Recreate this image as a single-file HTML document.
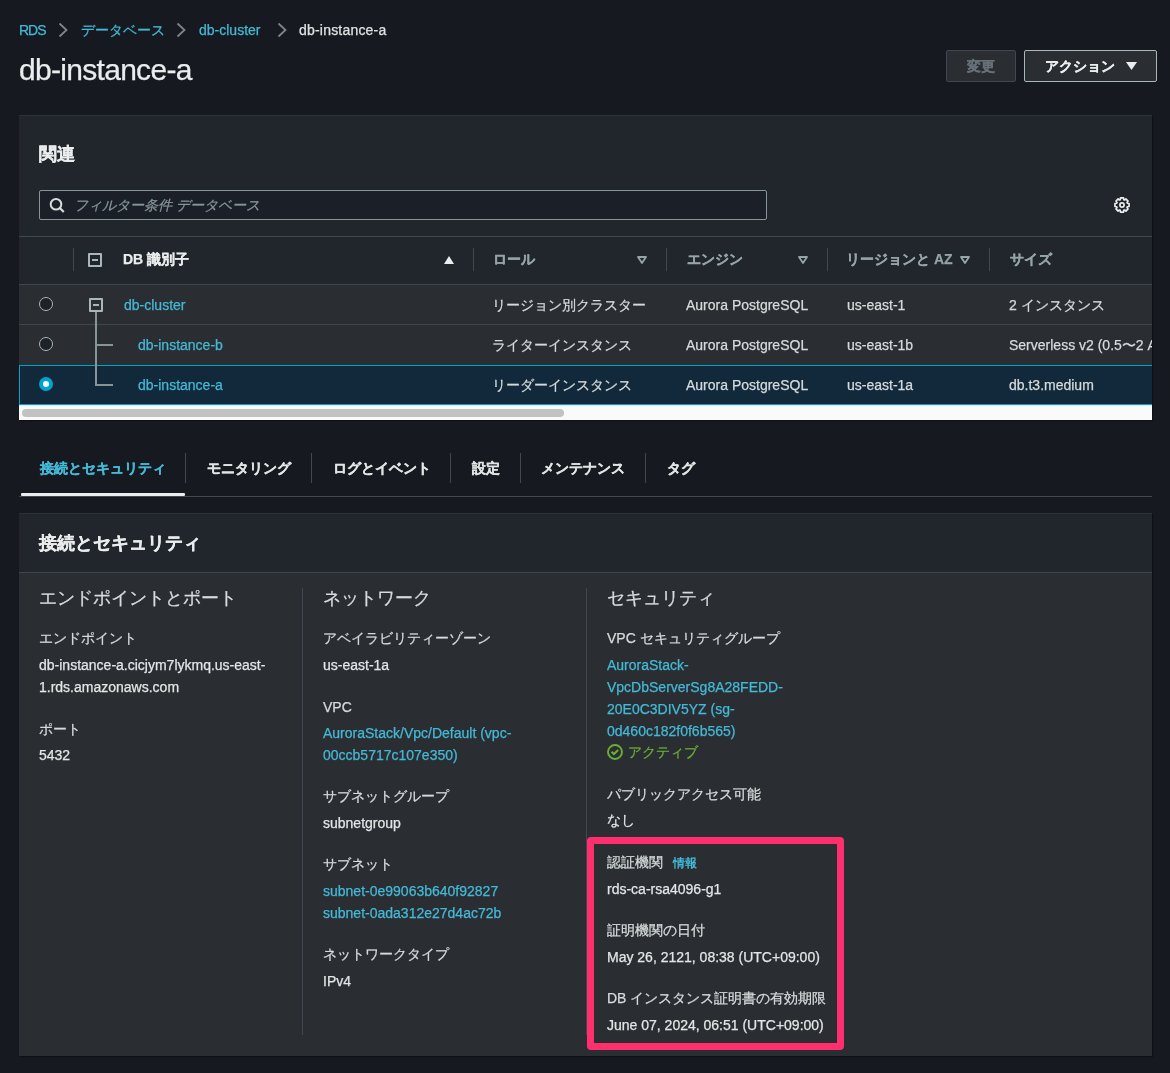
<!DOCTYPE html>
<html lang="ja">
<head>
<meta charset="utf-8">
<style>
*{box-sizing:border-box;margin:0;padding:0}
html,body{width:1170px;height:1073px;overflow:hidden;background:#16191f;font-family:"Liberation Sans",sans-serif;color:#d5dbdb;font-size:14px}
.t{position:absolute;white-space:nowrap;line-height:22px}

.b{font-weight:bold}
.chev{position:absolute;top:22px;width:10px;height:16px}
.btn{position:absolute;top:50px;height:32px;border:1px solid #545b64;border-radius:2px;font-weight:bold;font-size:14px;line-height:30px;text-align:center}
.panel{position:absolute;left:19px;width:1133px;background:#21252c;box-shadow:inset 0 1px 0 #2c3037,1px 1px 1px rgba(0,0,0,.35)}
.vd{position:absolute;width:1px;background:#414750}
.hd{position:absolute;width:1133px;height:1px;background:#414750;left:0}
.radio{position:absolute;left:20px;width:14px;height:14px;border-radius:50%;border:1px solid #aab7b8;background:#1d2128}
.icb{position:absolute;width:14px;height:14px;border:2px solid #aab7b8;border-radius:1px}
.icb:after{content:"";position:absolute;left:2px;top:4px;width:6px;height:2px;background:#aab7b8}
.lbl{position:absolute;white-space:nowrap;line-height:22px;color:#d5dbdb}
.val{position:absolute;white-space:nowrap;line-height:22px;color:#e3e6e6}
.tab{position:absolute;top:457px;font-weight:bold;line-height:22px;color:#e1e4e4;white-space:nowrap}
.colh{position:absolute;font-size:18px;color:#d5dbdb;line-height:26px;white-space:nowrap}
.th{position:absolute;top:133px;font-weight:bold;color:#95a5a6;line-height:22px;white-space:nowrap}
.td{position:absolute;line-height:22px;white-space:nowrap;color:#d5dbdb}
.link,.val.link,.td.link,.tab.link{color:#44b9d6}
body *{-webkit-text-stroke:0.25px currentColor}
</style>
</head>
<body><div style="position:absolute;left:0;top:0;width:1170px;height:1073px;will-change:transform">
<!-- breadcrumb -->
<div class="t link" style="left:19px;top:19px;letter-spacing:-1px">RDS</div>
<svg class="chev" style="left:58px" width="10" height="16" viewBox="0 0 10 16"><path d="M1.5 1.5l7 6.5-7 6.5" fill="none" stroke="#7d8788" stroke-width="1.8"/></svg>
<div class="t link" style="left:81px;top:19px">データベース</div>
<svg class="chev" style="left:176px" width="10" height="16" viewBox="0 0 10 16"><path d="M1.5 1.5l7 6.5-7 6.5" fill="none" stroke="#7d8788" stroke-width="1.8"/></svg>
<div class="t link" style="left:199px;top:19px">db-cluster</div>
<svg class="chev" style="left:277px" width="10" height="16" viewBox="0 0 10 16"><path d="M1.5 1.5l7 6.5-7 6.5" fill="none" stroke="#7d8788" stroke-width="1.8"/></svg>
<div class="t" style="left:299px;top:19px;color:#dfe3e3;letter-spacing:0.2px">db-instance-a</div>

<div class="t" style="left:19px;top:52px;font-size:30px;line-height:36px;letter-spacing:-0.7px;color:#eaeded">db-instance-a</div>

<div class="btn" style="left:946px;width:70px;background:#2a2e33;border-color:#414750;color:#687078">変更</div>
<div class="btn" style="left:1024px;width:133px;background:#2a2e33;border-color:#aab7b8;color:#eaeded;text-align:left;padding-left:20px">アクション</div><svg style="position:absolute;left:1126px;top:62px" width="11" height="8" viewBox="0 0 11 8"><path d="M0 0H11L5.5 8z" fill="#eaeded"/></svg>

<!-- panel 1 -->
<div class="panel" style="top:115px;height:305px;overflow:hidden">
  <div class="t b" style="left:20px;top:27px;font-size:18px;line-height:24px;color:#eaeded">関連</div>
  <div style="position:absolute;left:20px;top:75px;width:728px;height:30px;border:1px solid #879596;border-radius:2px;background:#1a1f28"></div>
  <svg style="position:absolute;left:29px;top:81px" width="18" height="18" viewBox="0 0 18 18"><circle cx="8" cy="8.2" r="5.3" fill="none" stroke="#d5dbdb" stroke-width="2"/><path d="M11.8 12l4 4" stroke="#d5dbdb" stroke-width="2.2"/></svg>
  <div class="t" style="left:55px;top:79px;font-style:italic;color:#879596">フィルター条件 データベース</div>
  <svg style="position:absolute;left:1095px;top:82px" width="16" height="16" viewBox="0 0 16 16"><path d="M13.33 6.27 L15.04 6.50 L15.04 9.50 L13.33 9.73 L12.99 10.54 L14.04 11.92 L11.92 14.04 L10.54 12.99 L9.73 13.33 L9.50 15.04 L6.50 15.04 L6.27 13.33 L5.46 12.99 L4.08 14.04 L1.96 11.92 L3.01 10.54 L2.67 9.73 L0.96 9.50 L0.96 6.50 L2.67 6.27 L3.01 5.46 L1.96 4.08 L4.08 1.96 L5.46 3.01 L6.27 2.67 L6.50 0.96 L9.50 0.96 L9.73 2.67 L10.54 3.01 L11.92 1.96 L14.04 4.08 L12.99 5.46Z" fill="none" stroke="#eaeded" stroke-width="1.7" stroke-linejoin="round"/><circle cx="8" cy="8" r="2.1" fill="none" stroke="#eaeded" stroke-width="1.7"/></svg>

  <!-- table -->
  <div class="hd" style="top:121px"></div>
  <div class="vd" style="left:54px;top:133px;height:23px"></div>
  <div class="icb" style="left:69px;top:138px"></div>
  <div class="th" style="left:104px;color:#eaeded">DB 識別子</div>
  <svg style="position:absolute;left:425px;top:141px" width="10" height="8" viewBox="0 0 10 8"><path d="M5 0L10 8H0z" fill="#eaeded"/></svg>
  <div class="vd" style="left:454px;top:133px;height:23px"></div>
  <div class="th" style="left:474px">ロール</div>
  <svg style="position:absolute;left:618px;top:141px" width="10" height="8" viewBox="0 0 10 8"><path d="M1 1H9L5 7z" fill="none" stroke="#95a5a6" stroke-width="1.8" stroke-linejoin="round"/></svg>
  <div class="vd" style="left:647px;top:133px;height:23px"></div>
  <div class="th" style="left:668px">エンジン</div>
  <svg style="position:absolute;left:779px;top:141px" width="10" height="8" viewBox="0 0 10 8"><path d="M1 1H9L5 7z" fill="none" stroke="#95a5a6" stroke-width="1.8" stroke-linejoin="round"/></svg>
  <div class="vd" style="left:808px;top:133px;height:23px"></div>
  <div class="th" style="left:827px">リージョンと AZ</div>
  <svg style="position:absolute;left:941px;top:141px" width="10" height="8" viewBox="0 0 10 8"><path d="M1 1H9L5 7z" fill="none" stroke="#95a5a6" stroke-width="1.8" stroke-linejoin="round"/></svg>
  <div class="vd" style="left:970px;top:133px;height:23px"></div>
  <div class="th" style="left:991px">サイズ</div>

  <!-- rows -->
  <div style="position:absolute;left:0;top:169px;width:1133px;height:121px;background:#2a2e33"></div>
  <div class="hd" style="top:169px"></div>
  <div class="hd" style="top:209px"></div>
  <div style="position:absolute;left:0;top:250px;width:1200px;height:40px;background:#12293b;border:1px solid #00a5cf"></div>

  <div class="radio" style="top:182px"></div>
  <div class="radio" style="top:222px"></div>
  <div class="radio" style="top:262px;border:4px solid #00a5cf;background:#fff"></div>

  <div class="icb" style="left:70px;top:183px"></div>
  <div style="position:absolute;left:76px;top:197px;width:2px;height:74px;background:#879596"></div>
  <div style="position:absolute;left:77px;top:229px;width:17px;height:2px;background:#879596"></div>
  <div style="position:absolute;left:77px;top:269px;width:17px;height:2px;background:#879596"></div>

  <div class="td link" style="left:105px;top:179px">db-cluster</div>
  <div class="td link" style="left:119px;top:219px">db-instance-b</div>
  <div class="td link" style="left:119px;top:259px">db-instance-a</div>

  <div class="td" style="left:473px;top:179px">リージョン別クラスター</div>
  <div class="td" style="left:473px;top:219px">ライターインスタンス</div>
  <div class="td" style="left:473px;top:259px">リーダーインスタンス</div>

  <div class="td" style="left:667px;top:179px">Aurora PostgreSQL</div>
  <div class="td" style="left:667px;top:219px">Aurora PostgreSQL</div>
  <div class="td" style="left:667px;top:259px">Aurora PostgreSQL</div>

  <div class="td" style="left:828px;top:179px">us-east-1</div>
  <div class="td" style="left:828px;top:219px">us-east-1b</div>
  <div class="td" style="left:828px;top:259px">us-east-1a</div>

  <div class="td" style="left:990px;top:179px">2 インスタンス</div>
  <div class="td" style="left:990px;top:219px">Serverless v2 (0.5〜2 ACU)</div>
  <div class="td" style="left:990px;top:259px">db.t3.medium</div>

  <!-- scrollbar -->
  <div style="position:absolute;left:0;top:290px;width:1133px;height:15px;background:#fafafa;border-top:1px solid #e8e8e8"></div>
  <div style="position:absolute;left:3px;top:294px;width:542px;height:8px;border-radius:4px;background:#c2c2c2"></div>
</div>

<!-- tabs -->
<div class="tab link" style="left:40px">接続とセキュリティ</div>
<div class="vd" style="left:185px;top:453px;height:30px"></div>
<div class="tab" style="left:207px">モニタリング</div>
<div class="vd" style="left:311px;top:453px;height:30px"></div>
<div class="tab" style="left:333px">ログとイベント</div>
<div class="vd" style="left:450px;top:453px;height:30px"></div>
<div class="tab" style="left:472px">設定</div>
<div class="vd" style="left:520px;top:453px;height:30px"></div>
<div class="tab" style="left:541px">メンテナンス</div>
<div class="vd" style="left:645px;top:453px;height:30px"></div>
<div class="tab" style="left:667px">タグ</div>
<div style="position:absolute;left:19px;top:496px;width:1133px;height:1px;background:#414750"></div>
<div style="position:absolute;left:21px;top:493px;width:164px;height:3px;background:#eaeded;border-radius:1px"></div>

<!-- panel 2 -->
<div class="panel" style="top:513px;height:543px">
  <div class="t b" style="left:20px;top:18px;font-size:18px;line-height:24px;color:#eaeded">接続とセキュリティ</div>
  <div style="position:absolute;left:0;top:59px;width:1133px;height:484px;background:#2a2e33;border-top:1px solid #414750"></div>
</div>

<div class="vd" style="left:302px;top:588px;height:447px"></div>
<div class="vd" style="left:586px;top:588px;height:447px"></div>

<div class="colh" style="left:39px;top:585px">エンドポイントとポート</div>
<div class="colh" style="left:323px;top:585px">ネットワーク</div>
<div class="colh" style="left:607px;top:585px">セキュリティ</div>

<!-- col 1 -->
<div class="lbl" style="left:39px;top:627px">エンドポイント</div>
<div class="val" style="left:39px;top:654px">db-instance-a.cicjym7lykmq.us-east-</div>
<div class="val" style="left:39px;top:676px">1.rds.amazonaws.com</div>
<div class="lbl" style="left:39px;top:718px">ポート</div>
<div class="val" style="left:39px;top:744px">5432</div>

<!-- col 2 -->
<div class="lbl" style="left:323px;top:627px">アベイラビリティーゾーン</div>
<div class="val" style="left:323px;top:654px">us-east-1a</div>
<div class="lbl" style="left:323px;top:696px">VPC</div>
<div class="val link" style="left:323px;top:722px">AuroraStack/Vpc/Default (vpc-</div>
<div class="val link" style="left:323px;top:744px">00ccb5717c107e350)</div>
<div class="lbl" style="left:323px;top:785px">サブネットグループ</div>
<div class="val" style="left:323px;top:812px">subnetgroup</div>
<div class="lbl" style="left:323px;top:853px">サブネット</div>
<div class="val link" style="left:323px;top:880px">subnet-0e99063b640f92827</div>
<div class="val link" style="left:323px;top:902px">subnet-0ada312e27d4ac72b</div>
<div class="lbl" style="left:323px;top:943px">ネットワークタイプ</div>
<div class="val" style="left:323px;top:970px">IPv4</div>

<!-- col 3 -->
<div class="lbl" style="left:607px;top:627px">VPC セキュリティグループ</div>
<div class="val link" style="left:607px;top:654px">AuroraStack-</div>
<div class="val link" style="left:607px;top:676px">VpcDbServerSg8A28FEDD-</div>
<div class="val link" style="left:607px;top:698px">20E0C3DIV5YZ (sg-</div>
<div class="val link" style="left:607px;top:720px">0d460c182f0f6b565)</div>
<svg style="position:absolute;left:607px;top:744px" width="16" height="16" viewBox="0 0 16 16"><circle cx="8" cy="8" r="7" fill="none" stroke="#6aaf35" stroke-width="1.9"/><path d="M4.6 7.9l2.3 2.1 4.3-4" fill="none" stroke="#6aaf35" stroke-width="2.1"/></svg>
<div class="val" style="left:628px;top:741px;color:#6aaf35">アクティブ</div>
<div class="lbl" style="left:607px;top:783px">パブリックアクセス可能</div>
<div class="val" style="left:607px;top:809px">なし</div>
<div class="lbl" style="left:607px;top:851px">認証機関<span class="link b" style="font-size:12px;margin-left:10px;-webkit-text-stroke:0">情報</span></div>
<div class="val" style="left:607px;top:878px">rds-ca-rsa4096-g1</div>
<div class="lbl" style="left:607px;top:919px">証明機関の日付</div>
<div class="val" style="left:607px;top:946px">May 26, 2121, 08:38 (UTC+09:00)</div>
<div class="lbl" style="left:607px;top:987px">DB インスタンス証明書の有効期限</div>
<div class="val" style="left:607px;top:1014px">June 07, 2024, 06:51 (UTC+09:00)</div>

<!-- highlight -->
<div style="position:absolute;left:587px;top:837px;width:257px;height:213px;border:7px solid #ff2e6d;border-radius:4px"></div>
</div></body>
</html>
